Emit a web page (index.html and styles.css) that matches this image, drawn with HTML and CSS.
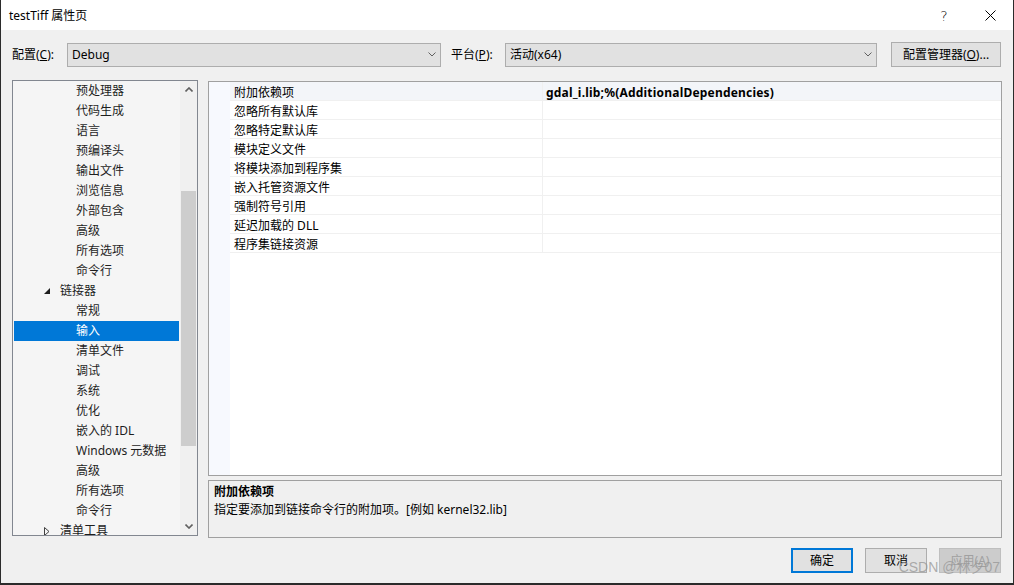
FILE: index.html
```html
<!DOCTYPE html>
<html lang="zh-CN">
<head>
<meta charset="UTF-8" />
<title>testTiff 属性页</title>
<link rel="stylesheet" href="styles.css">
</head>
<body>

<div class="window">

  <!-- TITULO -->
  <div class="titlebar">
    <div class="title">testTiff 属性页</div>
    <div class="ctl help">?</div>
    <div class="ctl close">
      <svg width="11" height="11" viewBox="0 0 11 11"><path d="M0.5 0.5 L10.5 10.5 M10.5 0.5 L0.5 10.5" stroke="#000" stroke-width="1" fill="none"/></svg>
    </div>
  </div>

  <!-- CONFIGURACAO -->
  <div class="config-row">
    <label class="lbl lbl-config">配置(<u>C</u>):</label>
    <div class="combo combo-config">
      <span>Debug</span>
      <svg width="8" height="5" viewBox="0 0 8 5"><polyline points="0.5,0.5 4,4 7.5,0.5" stroke="#606060" fill="none"/></svg>
    </div>
    <label class="lbl lbl-platform">平台(<u>P</u>):</label>
    <div class="combo combo-platform">
      <span>活动(x64)</span>
      <svg width="8" height="5" viewBox="0 0 8 5"><polyline points="0.5,0.5 4,4 7.5,0.5" stroke="#606060" fill="none"/></svg>
    </div>
    <button class="btn btn-manager">配置管理器(<u>O</u>)...</button>
  </div>

  <!-- CONTEUDO -->
  <div class="main">
    <div class="tree">
      <div class="tree-items">
        <div class="item lv2">预处理器</div>
        <div class="item lv2">代码生成</div>
        <div class="item lv2">语言</div>
        <div class="item lv2">预编译头</div>
        <div class="item lv2">输出文件</div>
        <div class="item lv2">浏览信息</div>
        <div class="item lv2">外部包含</div>
        <div class="item lv2">高级</div>
        <div class="item lv2">所有选项</div>
        <div class="item lv2">命令行</div>
        <div class="item lv1">
          <svg class="tw" width="6" height="6" viewBox="0 0 6 6"><polygon points="6,0 6,6 0,6" fill="#1e1e1e"/></svg>
          链接器
        </div>
        <div class="item lv2">常规</div>
        <div class="item lv2 selected">输入</div>
        <div class="item lv2">清单文件</div>
        <div class="item lv2">调试</div>
        <div class="item lv2">系统</div>
        <div class="item lv2">优化</div>
        <div class="item lv2">嵌入的 IDL</div>
        <div class="item lv2">Windows 元数据</div>
        <div class="item lv2">高级</div>
        <div class="item lv2">所有选项</div>
        <div class="item lv2">命令行</div>
        <div class="item lv1">
          <svg class="tw" width="6" height="9" viewBox="0 0 6 9"><polygon points="0.5,0.5 5,4.5 0.5,8.5" fill="none" stroke="#404040"/></svg>
          清单工具
        </div>
      </div>
      <div class="scrollbar">
        <div class="arrow">
          <svg width="8" height="5" viewBox="0 0 8 5"><polyline points="0.5,4.5 4,1 7.5,4.5" stroke="#606060" stroke-width="1.6" fill="none"/></svg>
        </div>
        <div class="track"><div class="thumb"></div></div>
        <div class="arrow">
          <svg width="8" height="5" viewBox="0 0 8 5"><polyline points="0.5,0.5 4,4 7.5,0.5" stroke="#606060" stroke-width="1.6" fill="none"/></svg>
        </div>
      </div>
    </div>

    <div class="right">
      <div class="grid">
        <div class="row current"><div class="name">附加依赖项</div><div class="value">gdal_i.lib;%(AdditionalDependencies)</div></div>
        <div class="row"><div class="name">忽略所有默认库</div><div class="value"></div></div>
        <div class="row"><div class="name">忽略特定默认库</div><div class="value"></div></div>
        <div class="row"><div class="name">模块定义文件</div><div class="value"></div></div>
        <div class="row"><div class="name">将模块添加到程序集</div><div class="value"></div></div>
        <div class="row"><div class="name">嵌入托管资源文件</div><div class="value"></div></div>
        <div class="row"><div class="name">强制符号引用</div><div class="value"></div></div>
        <div class="row"><div class="name">延迟加载的 DLL</div><div class="value"></div></div>
        <div class="row"><div class="name">程序集链接资源</div><div class="value"></div></div>
      </div>
      <div class="desc">
        <div class="desc-title">附加依赖项</div>
        <div class="desc-text">指定要添加到链接命令行的附加项。[例如 kernel32.lib]</div>
      </div>
    </div>
  </div>

  <!-- BOTOES -->
  <div class="footer">
    <button class="btn btn-ok">确定</button>
    <button class="btn">取消</button>
    <button class="btn disabled">应用(<u>A</u>)</button>
  </div>

  <div class="watermark">CSDN @林夕07</div>
</div>

</body>
</html>
```

FILE: styles.css
```css
/* BASE */
* {
  box-sizing: border-box;
}
body {
  margin: 0;
  background: #2b2b2b;
  font-family: "Noto Sans", "Noto Sans CJK SC", sans-serif;
  font-size: 12px;
  color: #000;
}

/* JANELA */
.window {
  position: relative;
  width: 1012px;
  height: 583px;
  margin-left: 1px;
  background: #f0f0f0;
  display: flex;
  flex-direction: column;
}

/* BARRA DE TITULO */
.titlebar {
  height: 30px;
  background: #fff;
  display: flex;
  align-items: center;
  padding-left: 8px;
}
.titlebar .title {
  flex: 1;
  line-height: 16px;
  margin-top: 2px;
}
.titlebar .ctl {
  width: 46px;
  height: 30px;
  display: flex;
  align-items: center;
  justify-content: center;
}
.titlebar .help {
  font-size: 14px;
  font-family: "DejaVu Sans", sans-serif;
  font-weight: 300;
  margin-top: 1px;
}

/* LINHA DE CONFIGURACAO */
.config-row {
  margin-top: 12px;
  height: 25px;
  display: flex;
  align-items: center;
}
.lbl {
  line-height: 16px;
}
.lbl-config {
  margin-left: 11px;
  width: 55px;
}
.lbl-platform {
  margin-left: 10px;
  width: 54px;
}
.combo {
  height: 24px;
  background: #e1e1e1;
  border: 1px solid #adadad;
  display: flex;
  align-items: center;
  justify-content: space-between;
  padding: 0 4px 0 4px;
  line-height: 16px;
}
.combo-config {
  width: 374px;
}
.combo-platform {
  width: 372px;
}
.btn-manager {
  margin-left: 14px;
  width: 110px;
  height: 25px;
}

/* BOTOES */
.btn {
  font-family: inherit;
  font-size: 12px;
  background: #e1e1e1;
  border: 1px solid #adadad;
  color: #000;
  padding: 0;
  line-height: 16px;
}
.btn.disabled {
  background: #cccccc;
  border-color: #bfbfbf;
  color: #a0a0a0;
}
.btn-ok {
  border: 2px solid #0078d7;
}

/* AREA PRINCIPAL */
.main {
  margin-top: 13px;
  display: flex;
  padding-left: 11px;
}

/* ARVORE */
.tree {
  width: 186px;
  height: 456px;
  border: 1px solid #828790;
  background: #f5f5f5;
  display: flex;
  overflow: hidden;
}
.tree-items {
  flex: 1;
  overflow: hidden;
  padding-right: 1px;
}
.item {
  height: 20px;
  line-height: 20px;
  white-space: nowrap;
  color: #1e1e1e;
  display: flex;
  align-items: center;
}
.item.lv2 {
  padding-left: 63px;
}
.item.lv1 {
  padding-left: 31px;
}
.item .tw {
  margin-right: 10px;
}
.item.selected {
  background: #0078d7;
  color: #fff;
  margin-left: 1px;
  padding-left: 62px;
}
.scrollbar {
  width: 17px;
  background: #f0f0f0;
  display: flex;
  flex-direction: column;
  padding: 0 1px;
}
.arrow {
  height: 17px;
  display: flex;
  align-items: center;
  justify-content: center;
}
.track {
  flex: 1;
}
.thumb {
  margin-top: 93px;
  height: 255px;
  background: #cdcdcd;
}

/* GRADE DE PROPRIEDADES */
.right {
  margin-left: 10px;
  margin-top: 1px;
  width: 794px;
  display: flex;
  flex-direction: column;
  gap: 4px;
}
.grid {
  height: 395px;
  border: 1px solid #a0a0a0;
  background: #fff;
  padding-left: 21px;
  background-image: linear-gradient(#f7f9fe, #f7f9fe);
  background-size: 21px 100%;
  background-repeat: no-repeat;
}
.row {
  height: 19px;
  display: flex;
  border-bottom: 1px solid #f0f0f0;
  background: #fff;
}
.row.current {
  background: #f3f5f9;
}
.row .name {
  width: 312px;
  padding: 3px 0 0 4px;
  line-height: 15px;
  white-space: nowrap;
}
.row .value {
  flex: 1;
  border-left: 1px solid #f0f0f0;
  padding: 3px 0 0 3px;
  line-height: 15px;
  font-weight: 700;
  letter-spacing: 0.2px;
  white-space: nowrap;
}

/* DESCRICAO */
.desc {
  height: 58px;
  border: 1px solid #a0a0a0;
  padding: 2px 5px;
  line-height: 18px;
}
.desc-title {
  font-weight: 700;
}

/* RODAPE */
.footer {
  margin-top: 10px;
  display: flex;
  justify-content: flex-end;
  gap: 12px;
  padding-right: 12px;
}
.footer .btn {
  width: 62px;
  height: 25px;
}

/* MARCA D'AGUA */
.watermark {
  position: absolute;
  right: 13px;
  bottom: 8px;
  font-size: 14px;
  line-height: 16px;
  color: rgba(150, 150, 150, 0.75);
  font-family: "Liberation Sans", "Noto Sans CJK SC", sans-serif;
}
```
